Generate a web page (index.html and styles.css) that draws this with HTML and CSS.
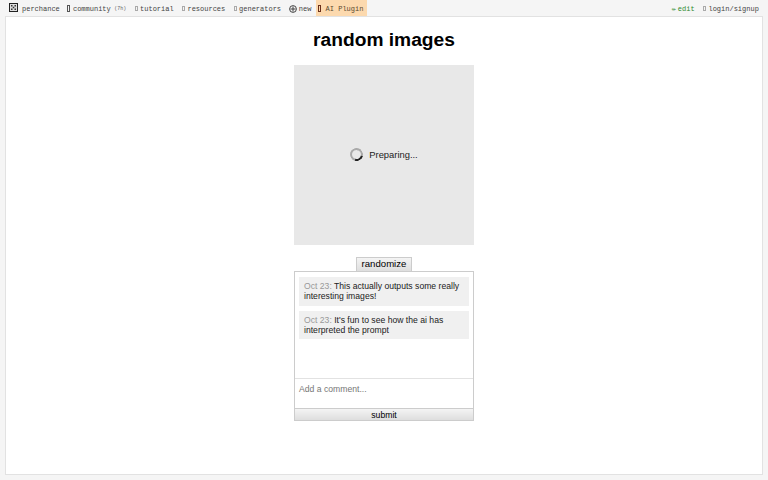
FILE: index.html
```html
<!DOCTYPE html>
<html lang="en">
  <head>
    <meta charset="UTF-8" />
    <meta name="viewport" content="width=device-width, initial-scale=1.0" />
    <title>random images</title>
    <link rel="stylesheet" href="styles.css">
  </head>
  <body>
    <nav class="topbar">
      <div class="nav-left">
        <a class="nav-link home">
          <svg class="dice" width="9" height="9" viewBox="0 0 9 9">
            <rect x="0.5" y="0.5" width="8" height="8" fill="#ddd" stroke="#222" />
            <rect x="2" y="2" width="1.500" height="1.500" fill="#333" />
            <rect x="5.500" y="2" width="1.500" height="1.500" fill="#333" />
            <rect x="3.750" y="3.750" width="1.500" height="1.500" fill="#333" />
            <rect x="2" y="5.500" width="1.500" height="1.500" fill="#333" />
            <rect x="5.500" y="5.500" width="1.500" height="1.500" fill="#333" />
          </svg>
          <span>perchance</span>
        </a>
        <a class="nav-link"><span class="tofu big"></span><span>community</span><small>(7h)</small></a>
        <a class="nav-link"><span class="tofu"></span><span>tutorial</span></a>
        <a class="nav-link"><span class="tofu"></span><span>resources</span></a>
        <a class="nav-link"><span class="tofu"></span><span>generators</span></a>
        <a class="nav-link">
          <svg class="globe" width="8" height="8" viewBox="0 0 8 8">
            <circle cx="4" cy="4" r="3.4" fill="none" stroke="#333" stroke-width="0.9" />
            <path d="M4 1.500V6.500M1.500 4H6.500" stroke="#333" stroke-width="0.9" />
          </svg>
          <span>new</span>
        </a>
        <a class="nav-link plugin"><span class="tofu big"></span><span>AI Plugin</span></a>
      </div>
      <div class="nav-right">
        <a class="nav-link edit"><span class="pencil">✏</span><span>edit</span></a>
        <a class="nav-link"><span class="tofu"></span><span>login/signup</span></a>
      </div>
    </nav>

    <main class="page">
      <h1>random images</h1>
      <div class="image-box">
        <div class="spinner"></div>
        <span>Preparing...</span>
      </div>
      <button class="randomize">randomize</button>
      <div class="comments">
        <div class="comment-list">
          <div class="comment"><span class="date">Oct 23:</span> This actually outputs some really interesting images!</div>
          <div class="comment"><span class="date">Oct 23:</span> It's fun to see how the ai has interpreted the prompt</div>
        </div>
        <div class="comment-input">Add a comment...</div>
        <button class="submit">submit</button>
      </div>
    </main>
  </body>
</html>
```

FILE: styles.css
```css
* {
  box-sizing: border-box;
}

body {
  margin: 0;
  height: 480px;
  overflow: hidden;
  background: #f5f5f5;
  font-family: "Liberation Sans", Arial, sans-serif;
  color: #000;
}

.topbar {
  display: flex;
  justify-content: space-between;
  height: 16px;
  padding-left: 9px;
  padding-right: 5px;
  font-family: "Liberation Mono", monospace;
  font-size: 7px;
  color: #444;
}

.nav-left,
.nav-right {
  display: flex;
  align-items: stretch;
}

.nav-link {
  display: flex;
  align-items: center;
  padding: 1px 4.15px 0;
  white-space: nowrap;
}

.nav-link small {
  font-size: 5px;
  margin-left: 3.5px;
  color: #666;
}

.home {
  padding-left: 0;
  padding-right: 3px;
}

.dice {
  margin-right: 4px;
  margin-top: -2px;
}

.globe {
  margin-right: 1.5px;
}

.tofu {
  display: inline-block;
  width: 3px;
  height: 5px;
  margin-right: 2.5px;
  border: 0.5px solid #aaa;
}

.tofu.big {
  height: 7px;
  margin-right: 3px;
  margin-top: -1px;
  border: 1px solid #555;
}

.plugin {
  padding: 1px 4px 0 2px;
  background: #fcd9ae;
  color: #5a4a30;
}

.plugin .tofu.big {
  margin-right: 5px;
  border-color: #6b2f1a;
}

.edit {
  color: #2a8a2a;
}

.pencil {
  font-size: 7px;
  margin-right: 2px;
}

.page {
  display: flex;
  flex-direction: column;
  align-items: center;
  width: 758px;
  height: 459px;
  margin-left: 5px;
  background: #fff;
  border: 1px solid #e2e2e2;
}

h1 {
  margin: 11px 0 13px;
  font-size: 19.2px;
  line-height: 24px;
  font-weight: bold;
}

.image-box {
  display: flex;
  justify-content: center;
  align-items: center;
  gap: 6px;
  width: 180px;
  height: 180px;
  padding-bottom: 1px;
  background: #e8e8e8;
  font-size: 9.4px;
  color: #222;
}

.spinner {
  width: 13px;
  height: 13px;
  border: 2px solid #aaa;
  border-right-color: #222;
  border-radius: 50%;
  transform: rotate(60deg);
}

button {
  font-family: "Liberation Sans", Arial, sans-serif;
  color: #000;
  background: linear-gradient(to bottom, #f4f4f4, #dedede);
  border: 1px solid #ccc;
  padding: 0;
}

.randomize {
  width: 56px;
  height: 15px;
  margin-top: 12px;
  padding-bottom: 2px;
  font-size: 9.6px;
  line-height: 11px;
}

.comments {
  display: flex;
  flex-direction: column;
  width: 180px;
  height: 150px;
  margin-top: -1px;
  border: 1px solid #ccc;
}

.comment-list {
  flex: 1;
  padding: 5px 4px;
}

.comment {
  height: 28.5px;
  padding: 4px 5px;
  margin-bottom: 5px;
  background: #f0f0f0;
  font-size: 8.64px;
  line-height: 10px;
  color: #222;
}

.date {
  color: #999;
}

.comment-input {
  height: 30px;
  padding: 5px 4px;
  border-top: 1px solid #e2e2e2;
  font-size: 8.64px;
  line-height: 11px;
  color: #777;
}

.submit {
  height: 13px;
  margin: 0 -1px -1px;
  font-size: 8.64px;
  line-height: 10px;
}
```
